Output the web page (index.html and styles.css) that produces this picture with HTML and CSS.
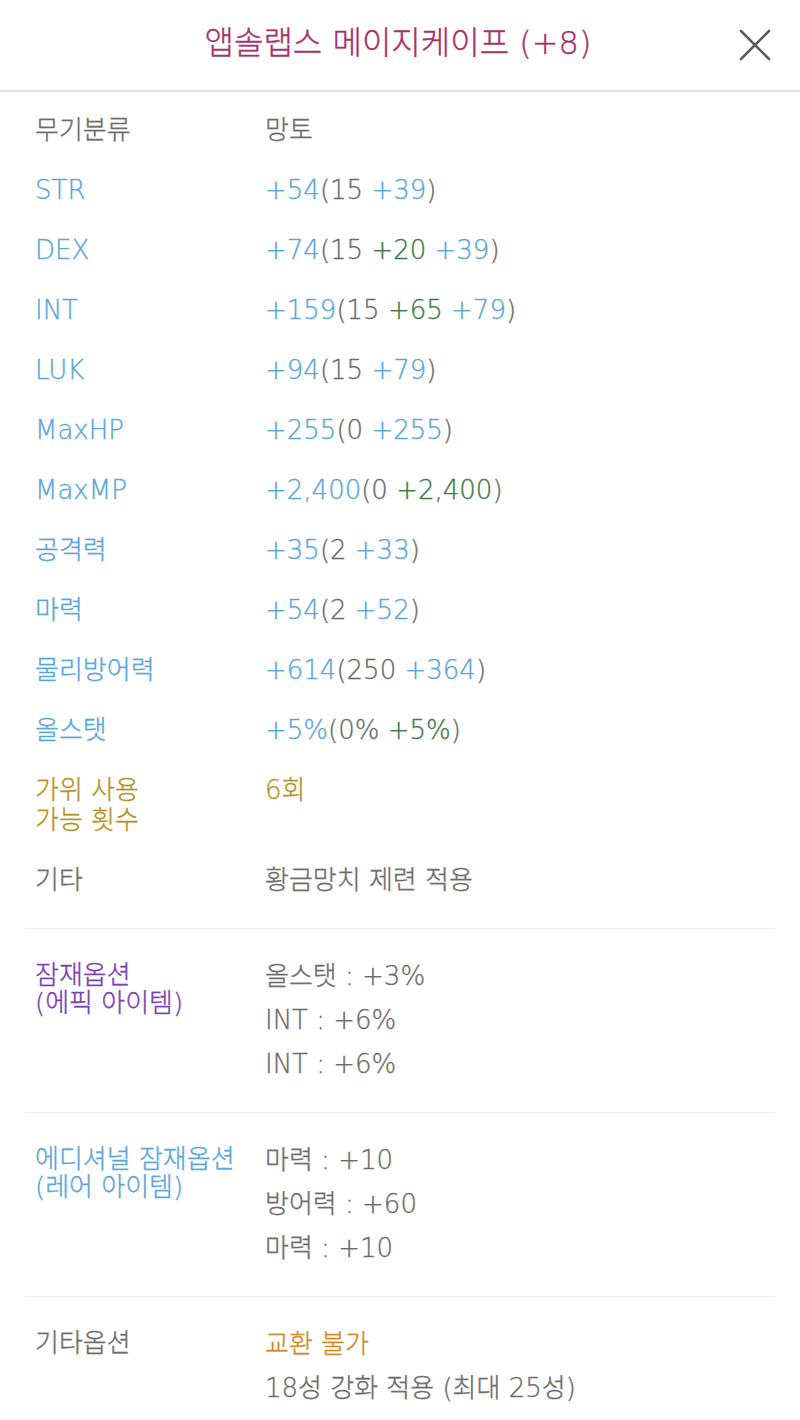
FILE: index.html
```html
<!DOCTYPE html>
<html lang="ko">
<head>
<meta charset="utf-8">
<title>앱솔랩스 메이지케이프 (+8)</title>
<link rel="stylesheet" href="styles.css">
</head>
<body>
<div class="sheet">
  <header class="top">
    <div></div>
    <h1 class="title">앱솔랩스 메이지케이프 (+8)</h1>
    <button class="close" aria-label="닫기">
      <svg width="34" height="34" viewBox="0 0 34 34"><path d="M3 3 L31 31 M31 3 L3 31" stroke="#5a5a5a" stroke-width="2.6" stroke-linecap="round" fill="none"/></svg>
    </button>
  </header>

  <section class="block stats">
    <div class="row"><div class="lbl">무기분류</div><div class="val">망토</div></div>
    <div class="row"><div class="lbl blue">STR</div><div class="val"><span class="blue">+54</span>(15 <span class="blue">+39</span>)</div></div>
    <div class="row"><div class="lbl blue">DEX</div><div class="val"><span class="blue">+74</span>(15 <span class="green">+20</span> <span class="blue">+39</span>)</div></div>
    <div class="row"><div class="lbl blue">INT</div><div class="val"><span class="blue">+159</span>(15 <span class="green">+65</span> <span class="blue">+79</span>)</div></div>
    <div class="row"><div class="lbl blue">LUK</div><div class="val"><span class="blue">+94</span>(15 <span class="blue">+79</span>)</div></div>
    <div class="row"><div class="lbl blue">MaxHP</div><div class="val"><span class="blue">+255</span>(0 <span class="blue">+255</span>)</div></div>
    <div class="row"><div class="lbl blue">MaxMP</div><div class="val"><span class="blue">+2,400</span>(0 <span class="green">+2,400</span>)</div></div>
    <div class="row"><div class="lbl blue">공격력</div><div class="val"><span class="blue">+35</span>(2 <span class="blue">+33</span>)</div></div>
    <div class="row"><div class="lbl blue">마력</div><div class="val"><span class="blue">+54</span>(2 <span class="blue">+52</span>)</div></div>
    <div class="row"><div class="lbl blue">물리방어력</div><div class="val"><span class="blue">+614</span>(250 <span class="blue">+364</span>)</div></div>
    <div class="row"><div class="lbl blue">올스탯</div><div class="val"><span class="blue">+5%</span>(0% <span class="green">+5%</span>)</div></div>
    <div class="row"><div class="lbl gold">가위 사용<br>가능 횟수</div><div class="val gold">6회</div></div>
    <div class="row"><div class="lbl">기타</div><div class="val">황금망치 제련 적용</div></div>
  </section>

  <section class="block opts">
    <div class="orow">
      <div class="olbl purple">잠재옵션<br>(에픽 아이템)</div>
      <div class="ovals"><div>올스탯 : +3%</div><div>INT : +6%</div><div>INT : +6%</div></div>
    </div>
  </section>

  <section class="block opts">
    <div class="orow">
      <div class="olbl blue">에디셔널 잠재옵션<br>(레어 아이템)</div>
      <div class="ovals"><div>마력 : +10</div><div>방어력 : +60</div><div>마력 : +10</div></div>
    </div>
  </section>

  <section class="block opts last">
    <div class="orow">
      <div class="olbl">기타옵션</div>
      <div class="ovals"><div class="orange">교환 불가</div><div>18성 강화 적용 (최대 25성)</div></div>
    </div>
  </section>
</div>
</body>
</html>
```

FILE: styles.css
```css
* { box-sizing: border-box; }
html, body { margin: 0; padding: 0; background: #ffffff; }
body {
  font-family: "DejaVu Sans", "Noto Sans CJK KR", sans-serif;
  font-weight: 300;
  color: #6d6d6d;
  font-size: 26px;
  -webkit-text-stroke: 0.35px currentColor;
}
.sheet { width: 800px; }

.top {
  height: 92px;
  display: grid;
  grid-template-columns: 1fr auto 1fr;
  align-items: center;
  border-bottom: 2px solid #e2e2e2;
}
.title {
  margin: 0;
  font-size: 32px;
  font-weight: 300;
  color: #a5316b;
  line-height: 40px;
  padding-bottom: 4px;
  padding-right: 4px;
  white-space: nowrap;
}
.close {
  justify-self: end;
  margin-right: 28px;
  margin-bottom: 0;
  width: 34px;
  height: 34px;
  padding: 0;
  border: 0;
  background: none;
  display: flex;
}

.block {
  margin: 0 25px;
  border-bottom: 1px solid #ebebeb;
}
.block.last { border-bottom: 0; }
.stats { padding: 8px 0 18px; }

.row {
  display: flex;
  padding: 15px 10px;
  line-height: 30px;
}
.lbl { width: 230px; flex: none; }
.val { flex: 1; }

.opts { padding: 25px 0 26px; }
.orow { display: flex; padding: 0 10px; }
.olbl {
  width: 230px;
  flex: none;
  line-height: 28px;
  padding-top: 7px;
}
.ovals { flex: 1; line-height: 44px; }

.blue { color: #5aa7da; }
.green { color: #3d7d44; }
.gold { color: #b8921f; }
.purple { color: #7a40b6; }
.orange { color: #d28a23; }
```
